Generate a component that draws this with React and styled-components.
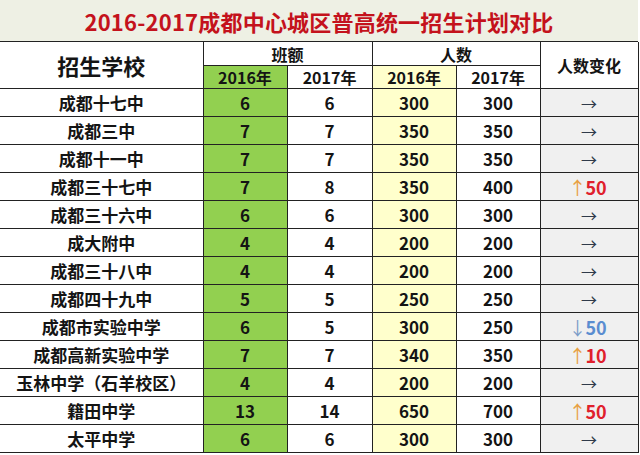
import styled, { createGlobalStyle } from "styled-components";

const GlobalStyle = createGlobalStyle`
  html, body {
    margin: 0;
    padding: 0;
    background: #ffffff;
  }
  body {
    font-family: "Noto Sans CJK SC", "Noto Sans", sans-serif;
  }
`;

const Sheet = styled.div`
  width: 640px;
  height: 455px;
  overflow: hidden;
  background: #ffffff;
`;

const TitleBar = styled.div`
  height: 41px;
  display: flex;
  align-items: center;
  justify-content: center;
  background: #eef0e4;
  border-bottom: 1px solid #222;
  width: 638px;
`;

const Title = styled.h1`
  margin: 0;
  font-size: 22px;
  font-weight: 700;
  color: #c4121c;
  letter-spacing: 0.2px;
  line-height: 1;
`;

const Table = styled.table`
  border-collapse: collapse;
  table-layout: fixed;
  width: 638px;
  font-weight: 700;
  color: #141414;
`;

const Col = styled.col`
  width: ${(p) => p.$w}px;
`;

const Th = styled.th`
  border: 1px solid #222;
  border-top: none;
  padding: 0;
  font-size: ${(p) => (p.$big ? 22 : 16)}px;
  font-weight: 700;
  text-align: center;
  background: ${(p) => p.$bg || "#ffffff"};
  height: ${(p) => p.$h || 22}px;
  line-height: 1;
  &:first-child {
    border-left: none;
  }
`;

const Td = styled.td`
  border: 1px solid #222;
  padding: 0;
  height: 27px;
  text-align: center;
  font-size: 17px;
  font-weight: ${(p) => (p.$name ? 600 : 700)};
  line-height: 1;
  background: ${(p) => p.$bg || "#ffffff"};
  &:first-child {
    border-left: none;
  }
`;

const Same = styled.span`
  color: #2f3a4a;
  font-weight: 400;
  font-size: 16px;
`;

const Delta = styled.span`
  color: ${(p) => (p.$up ? "#e0202c" : "#5b8dd0")};
  font-size: 18px;
`;

const Arrow = styled.span`
  color: ${(p) => (p.$up ? "#e8a040" : "#7a9cc8")};
  font-weight: 400;
  margin-right: -4px;
  position: relative;
  left: -3px;
`;

const rows = [
  ["成都十七中", 6, 6, 300, 300],
  ["成都三中", 7, 7, 350, 350],
  ["成都十一中", 7, 7, 350, 350],
  ["成都三十七中", 7, 8, 350, 400],
  ["成都三十六中", 6, 6, 300, 300],
  ["成大附中", 4, 4, 200, 200],
  ["成都三十八中", 4, 4, 200, 200],
  ["成都四十九中", 5, 5, 250, 250],
  ["成都市实验中学", 6, 5, 300, 250],
  ["成都高新实验中学", 7, 7, 340, 350],
  ["玉林中学（石羊校区）", 4, 4, 200, 200],
  ["籍田中学", 13, 14, 650, 700],
  ["太平中学", 6, 6, 300, 300],
];

const Change = ({ a, b }) => {
  const d = b - a;
  if (d === 0) return <Same>→</Same>;
  const up = d > 0;
  return (
    <Delta $up={up}>
      <Arrow $up={up}>{up ? "↑" : "↓"}</Arrow>
      {Math.abs(d)}
    </Delta>
  );
};

const App = () => {
  return (
    <Sheet>
      <GlobalStyle />
      <TitleBar>
        <Title>2016-2017成都中心城区普高统一招生计划对比</Title>
      </TitleBar>
      <Table>
        <colgroup>
          <Col $w={203} />
          <Col $w={84} />
          <Col $w={85} />
          <Col $w={84} />
          <Col $w={84} />
          <Col $w={98} />
        </colgroup>
        <thead>
          <tr>
            <Th rowSpan={2} $big>
              招生学校
            </Th>
            <Th colSpan={2} $h={23}>
              班额
            </Th>
            <Th colSpan={2} $h={23}>
              人数
            </Th>
            <Th rowSpan={2}>人数变化</Th>
          </tr>
          <tr>
            <Th $bg="#92d050">2016年</Th>
            <Th>2017年</Th>
            <Th $bg="#ffffcc">2016年</Th>
            <Th>2017年</Th>
          </tr>
        </thead>
        <tbody>
          {rows.map(([name, c16, c17, p16, p17]) => (
            <tr key={name}>
              <Td $name>{name}</Td>
              <Td $bg="#92d050">{c16}</Td>
              <Td>{c17}</Td>
              <Td $bg="#ffffcc">{p16}</Td>
              <Td>{p17}</Td>
              <Td $bg="#f0f0f0">
                <Change a={p16} b={p17} />
              </Td>
            </tr>
          ))}
        </tbody>
      </Table>
    </Sheet>
  );
};

export default App;
